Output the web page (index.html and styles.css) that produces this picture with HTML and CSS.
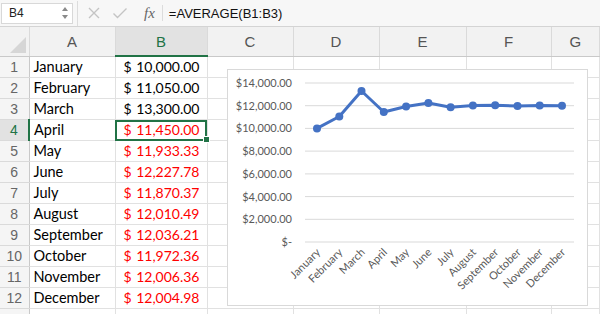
FILE: index.html
```html
<!DOCTYPE html>
<html lang="en">
<head>
  <meta charset="UTF-8" />
  <title>Sheet</title>
  <link rel="stylesheet" href="styles.css">
</head>
<body>

<!-- Formula bar -->
<div class="formula-bar">
  <div class="name-box">
    <span>B4</span>
    <svg class="stepper" width="8" height="14" viewBox="0 0 8 14">
      <path d="M1 5 L4 1 L7 5 Z" fill="#8a8a8a"/>
      <path d="M1 9 L4 13 L7 9 Z" fill="#8a8a8a"/>
    </svg>
  </div>
  <div class="fb-sep"></div>
  <div class="fb-icons">
    <svg width="14" height="14" viewBox="0 0 14 14"><path d="M2 2 L12 12 M12 2 L2 12" stroke="#c4c4c4" stroke-width="1.4" fill="none"/></svg>
    <svg width="16" height="14" viewBox="0 0 16 14"><path d="M1.5 7.5 L5.5 11.5 L14.5 2.5" stroke="#c4c4c4" stroke-width="1.4" fill="none"/></svg>
    <span class="fx">fx</span>
  </div>
  <div class="fb-sep short"></div>
  <div class="formula">=AVERAGE(B1:B3)</div>
</div>

<!-- Grid -->
<div class="sheet">
  <table class="grid">
    <colgroup>
      <col style="width:29px"><col style="width:86px"><col style="width:92px"><col style="width:86px">
      <col style="width:86px"><col style="width:87px"><col style="width:85px"><col>
    </colgroup>
    <thead>
      <tr>
        <th class="corner"><span class="tri"></span></th>
        <th>A</th><th class="sel">B</th><th>C</th><th>D</th><th>E</th><th>F</th><th>G</th>
      </tr>
    </thead>
    <tbody>
      <tr><td class="rh">1</td><td>January</td><td class="num"><div class="acct"><span>$</span><span>10,000.00</span></div></td><td></td><td></td><td></td><td></td><td></td></tr>
      <tr><td class="rh">2</td><td>February</td><td class="num"><div class="acct"><span>$</span><span>11,050.00</span></div></td><td></td><td></td><td></td><td></td><td></td></tr>
      <tr><td class="rh">3</td><td>March</td><td class="num"><div class="acct"><span>$</span><span>13,300.00</span></div></td><td></td><td></td><td></td><td></td><td></td></tr>
      <tr><td class="rh sel">4</td><td>April</td><td class="num red active"><div class="acct"><span>$</span><span>11,450.00</span></div><i class="handle"></i></td><td></td><td></td><td></td><td></td><td></td></tr>
      <tr><td class="rh">5</td><td>May</td><td class="num red"><div class="acct"><span>$</span><span>11,933.33</span></div></td><td></td><td></td><td></td><td></td><td></td></tr>
      <tr><td class="rh">6</td><td>June</td><td class="num red"><div class="acct"><span>$</span><span>12,227.78</span></div></td><td></td><td></td><td></td><td></td><td></td></tr>
      <tr><td class="rh">7</td><td>July</td><td class="num red"><div class="acct"><span>$</span><span>11,870.37</span></div></td><td></td><td></td><td></td><td></td><td></td></tr>
      <tr><td class="rh">8</td><td>August</td><td class="num red"><div class="acct"><span>$</span><span>12,010.49</span></div></td><td></td><td></td><td></td><td></td><td></td></tr>
      <tr><td class="rh">9</td><td>September</td><td class="num red"><div class="acct"><span>$</span><span>12,036.21</span></div></td><td></td><td></td><td></td><td></td><td></td></tr>
      <tr><td class="rh">10</td><td>October</td><td class="num red"><div class="acct"><span>$</span><span>11,972.36</span></div></td><td></td><td></td><td></td><td></td><td></td></tr>
      <tr><td class="rh">11</td><td>November</td><td class="num red"><div class="acct"><span>$</span><span>12,006.36</span></div></td><td></td><td></td><td></td><td></td><td></td></tr>
      <tr><td class="rh">12</td><td>December</td><td class="num red"><div class="acct"><span>$</span><span>12,004.98</span></div></td><td></td><td></td><td></td><td></td><td></td></tr>
      <tr><td class="rh"></td><td></td><td></td><td></td><td></td><td></td><td></td><td></td></tr>
    </tbody>
  </table>

  <!-- Chart floating over the cells -->
  <div class="chart">
    <svg width="361" height="237" viewBox="0 0 361 237">
      <g stroke="#d9d9d9" stroke-width="1">
        <line x1="78" y1="14" x2="347" y2="14"/>
        <line x1="78" y1="36.7" x2="347" y2="36.7"/>
        <line x1="78" y1="59.4" x2="347" y2="59.4"/>
        <line x1="78" y1="82.1" x2="347" y2="82.1"/>
        <line x1="78" y1="104.9" x2="347" y2="104.9"/>
        <line x1="78" y1="127.6" x2="347" y2="127.6"/>
        <line x1="78" y1="150.3" x2="347" y2="150.3"/>
        <line x1="78" y1="173" x2="347" y2="173"/>
      </g>
      <g class="ylab" text-anchor="end">
        <text x="65" y="18">$14,000.00</text>
        <text x="65" y="40.7">$12,000.00</text>
        <text x="65" y="63.4">$10,000.00</text>
        <text x="65" y="86.1">$8,000.00</text>
        <text x="65" y="108.9">$6,000.00</text>
        <text x="65" y="131.6">$4,000.00</text>
        <text x="65" y="154.3">$2,000.00</text>
        <text x="65" y="177">$-</text>
      </g>
      <polyline fill="none" stroke="#4472c4" stroke-width="3" stroke-linejoin="round"
        points="90,59.4 112.3,47.5 134.5,22 156.8,43 179.1,37.5 201.4,34.1 223.6,38.2 245.9,36.6 268.2,36.3 290.5,37 312.7,36.6 335,36.7"/>
      <g fill="#4472c4">
        <circle cx="90" cy="59.4" r="4"/><circle cx="112.3" cy="47.5" r="4"/>
        <circle cx="134.5" cy="22" r="4"/><circle cx="156.8" cy="43" r="4"/>
        <circle cx="179.1" cy="37.5" r="4"/><circle cx="201.4" cy="34.1" r="4"/>
        <circle cx="223.6" cy="38.2" r="4"/><circle cx="245.9" cy="36.6" r="4"/>
        <circle cx="268.2" cy="36.3" r="4"/><circle cx="290.5" cy="37" r="4"/>
        <circle cx="312.7" cy="36.6" r="4"/><circle cx="335" cy="36.7" r="4"/>
      </g>
      <g class="xlab" text-anchor="end">
        <text transform="translate(94,184) rotate(-45)">January</text>
        <text transform="translate(116.3,184) rotate(-45)">February</text>
        <text transform="translate(138.5,184) rotate(-45)">March</text>
        <text transform="translate(160.8,184) rotate(-45)">April</text>
        <text transform="translate(183.1,184) rotate(-45)">May</text>
        <text transform="translate(205.4,184) rotate(-45)">June</text>
        <text transform="translate(227.6,184) rotate(-45)">July</text>
        <text transform="translate(249.9,184) rotate(-45)">August</text>
        <text transform="translate(272.2,184) rotate(-45)">September</text>
        <text transform="translate(294.5,184) rotate(-45)">October</text>
        <text transform="translate(316.7,184) rotate(-45)">November</text>
        <text transform="translate(339,184) rotate(-45)">December</text>
      </g>
    </svg>
  </div>
</div>

</body>
</html>
```

FILE: styles.css
```css
body {
  margin: 0;
  background-color: #ffffff;
  font-family: "Lato", "Liberation Sans", sans-serif;
  color: #000;
  overflow: hidden;
}

/* Formula bar */
.formula-bar {
  height: 27px;
  box-sizing: border-box;
  display: flex;
  align-items: center;
  background-color: #f7f7f7;
  border-bottom: 1px solid #d4d4d4;
  padding-left: 1px;
}

.name-box {
  width: 72px;
  height: 21px;
  box-sizing: border-box;
  display: flex;
  align-items: center;
  justify-content: space-between;
  background-color: #fff;
  border: 1px solid #d8d8d8;
  padding: 0 3px 0 7px;
  font-family: "Liberation Sans", sans-serif;
  font-size: 12px;
  color: #222;
}

.fb-sep {
  width: 1px;
  height: 25px;
  background-color: #dcdcdc;
  margin-left: 4px;
}

.fb-sep.short {
  height: 16px;
  margin-left: 7px;
}

.fb-icons {
  display: flex;
  align-items: center;
  gap: 11px;
  padding-left: 9px;
}

.fx {
  font-family: "Liberation Serif", serif;
  font-style: italic;
  font-size: 15px;
  color: #666;
  margin-left: 5px;
}

.formula {
  font-family: "Liberation Sans", sans-serif;
  font-size: 13px;
  color: #111;
  padding-left: 6px;
}

/* Grid */
.sheet {
  position: relative;
  height: 287px;
  overflow: hidden;
}

.grid {
  border-collapse: collapse;
  table-layout: fixed;
  width: 100%;
}

.grid th {
  height: 28px;
  padding: 0;
  background-color: #f2f2f2;
  border-right: 1px solid #dadada;
  border-bottom: 1px solid #c9c9c9;
  font-family: "Liberation Sans", sans-serif;
  font-weight: normal;
  font-size: 15px;
  color: #555;
}

.grid th.sel {
  background-color: #e2e2e2;
  color: #217346;
  border-bottom: 2px solid #217346;
}

.grid th.corner {
  position: relative;
}

.tri {
  position: absolute;
  right: 3px;
  bottom: 3px;
  width: 0;
  height: 0;
  border-left: 16px solid transparent;
  border-bottom: 16px solid #d6d6d6;
}

.grid td {
  height: 20px;
  padding: 0 4px;
  border-right: 1px solid #e1e1e1;
  border-bottom: 1px solid #e1e1e1;
  font-size: 14.5px;
  line-height: 20px;
  white-space: nowrap;
  overflow: hidden;
}

.grid td.rh {
  padding: 0;
  text-align: center;
  background-color: #f5f5f5;
  border-right: 1px solid #c9c9c9;
  border-bottom: 1px solid #dadada;
  font-family: "Liberation Sans", sans-serif;
  font-size: 14px;
  color: #666;
}

.grid td.rh.sel {
  color: #217346;
  background-color: #e2e2e2;
  border-right: 2px solid #217346;
}

.grid td.num {
  padding: 0 7px 0 8px;
  font-size: 14px;
}

.acct {
  display: flex;
  justify-content: space-between;
}

.num.red {
  color: #ff0000;
}

.num.active {
  position: relative;
  overflow: visible;
  outline: 2px solid #217346;
  outline-offset: -2px;
}

.handle {
  position: absolute;
  right: -3px;
  bottom: -3px;
  width: 5px;
  height: 5px;
  background-color: #217346;
  border: 1px solid #fff;
}

/* Chart */
.chart {
  position: absolute;
  left: 227px;
  top: 42px;
  width: 361px;
  height: 237px;
  box-sizing: border-box;
  background-color: #fff;
  border: 1px solid #d9d9d9;
}

.chart svg {
  display: block;
  margin: -1px;
}

.ylab text {
  font-family: "Lato", sans-serif;
  font-size: 11px;
  fill: #595959;
}

.xlab text {
  font-family: "Lato", sans-serif;
  font-size: 11px;
  fill: #595959;
}
```
